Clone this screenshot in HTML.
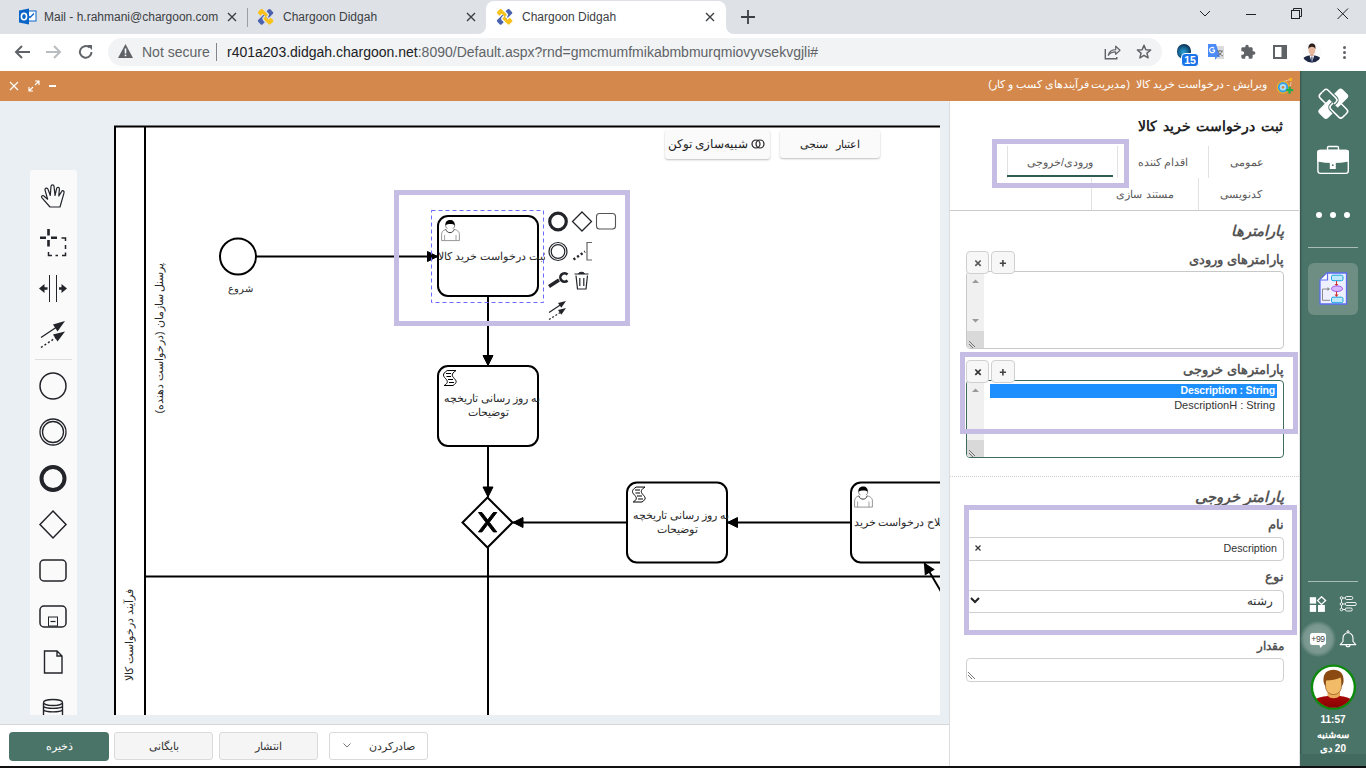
<!DOCTYPE html>
<html><head><meta charset="utf-8">
<style>
*{box-sizing:border-box;margin:0;padding:0}
html,body{width:1366px;height:768px;overflow:hidden;background:#fff;font-family:"Liberation Sans",sans-serif}
.abs{position:absolute}
#tabs{left:0;top:0;width:1366px;height:34px;background:#dee1e6}
#addr{left:0;top:34px;width:1366px;height:37px;background:#fff}
#orange{left:0;top:71px;width:1300px;height:30px;background:#d4884b}
#side{left:1300px;top:71px;width:66px;height:695px;background:#4b7468;box-shadow:inset 2px 0 2px -1px rgba(0,0,0,.3)}
#canvas{left:0;top:101px;width:950px;height:623px;background:#eaeff3}
#bottom{left:0;top:724px;width:950px;height:42px;background:#fff;border-top:1px solid #d6d6d6}
#panel{left:949px;top:101px;width:351px;height:665px;background:#fff;border-left:1px solid #dcdcdc;border-right:1px solid #e4e4e4}
#black{left:0;top:766px;width:1366px;height:2px;background:#111}
.t{position:absolute;white-space:nowrap;line-height:1}
.fa{direction:rtl}
</style></head><body>
<!-- TAB STRIP -->
<div id="tabs" class="abs">
  <!-- tab1 -->
  <svg class="abs" style="left:19px;top:8px" width="18" height="17" viewBox="0 0 18 17">
    <rect x="7" y="3" width="10" height="10" fill="#fff" stroke="#0a64c8" stroke-width="1"/>
    <path d="M9 7.5 l2 2 l4 -4" fill="none" stroke="#0a64c8" stroke-width="1.3"/>
    <path d="M0 2.5 L10 0.5 V16.5 L0 14.5 Z" fill="#0a64c8"/>
    <ellipse cx="5" cy="8.5" rx="2.6" ry="3.3" fill="none" stroke="#fff" stroke-width="1.6"/>
  </svg>
  <div class="t" style="left:44px;top:11px;font-size:12px;color:#3c4043">Mail - h.rahmani@chargoon.com</div>
  <svg class="abs" style="left:227px;top:12px" width="10" height="10"><path d="M1 1L9 9M9 1L1 9" stroke="#3c4043" stroke-width="1.4"/></svg>
  <div class="abs" style="left:247px;top:8px;width:1px;height:19px;background:#9aa0a6"></div>
  <!-- tab2 -->
  <svg class="abs" style="left:254px;top:5px" width="24" height="24" viewBox="0 0 44 44">
    <g id="fv2A"><rect x="-9.6" y="-6.8" width="19.2" height="13.6" rx="3.4" transform="translate(16.1 16.1) rotate(45)" fill="#f8c21a" stroke="#dee1e6" stroke-width="2.4"/></g>
    <g id="fv2C"><rect x="-9.6" y="-6.8" width="19.2" height="13.6" rx="3.4" transform="translate(26.6 27) rotate(45)" fill="#f8c21a" stroke="#dee1e6" stroke-width="2.4"/></g>
    <rect x="-9.6" y="-6.8" width="19.2" height="13.6" rx="3.4" transform="translate(26.4 16.3) rotate(-45)" fill="#4a62b0" stroke="#dee1e6" stroke-width="2.4"/>
    <rect x="-9.6" y="-6.8" width="19.2" height="13.6" rx="3.4" transform="translate(16 27.2) rotate(-45)" fill="#4a62b0" stroke="#dee1e6" stroke-width="2.4"/>
    <use href="#fv2A" clip-path="url(#ur)"/><use href="#fv2C" clip-path="url(#ll)"/>
  </svg>
  <div class="t" style="left:283px;top:11px;font-size:12px;color:#3c4043">Chargoon Didgah</div>
  <svg class="abs" style="left:466px;top:12px" width="10" height="10"><path d="M1 1L9 9M9 1L1 9" stroke="#3c4043" stroke-width="1.4"/></svg>
  <!-- active tab -->
  <div class="abs" style="left:486px;top:1px;width:240px;height:34px;background:#fff;border-radius:8px 8px 0 0"></div>
  <div class="abs" style="left:478px;top:26px;width:8px;height:8px;background:#fff"></div>
  <div class="abs" style="left:478px;top:26px;width:8px;height:8px;background:#dee1e6;border-radius:0 0 8px 0"></div>
  <div class="abs" style="left:726px;top:26px;width:8px;height:8px;background:#fff"></div>
  <div class="abs" style="left:726px;top:26px;width:8px;height:8px;background:#dee1e6;border-radius:0 0 0 8px"></div>
  <svg class="abs" style="left:493px;top:5px" width="24" height="24" viewBox="0 0 44 44">
    <g id="fv3A"><rect x="-9.6" y="-6.8" width="19.2" height="13.6" rx="3.4" transform="translate(16.1 16.1) rotate(45)" fill="#f8c21a" stroke="#fff" stroke-width="2.4"/></g>
    <g id="fv3C"><rect x="-9.6" y="-6.8" width="19.2" height="13.6" rx="3.4" transform="translate(26.6 27) rotate(45)" fill="#f8c21a" stroke="#fff" stroke-width="2.4"/></g>
    <rect x="-9.6" y="-6.8" width="19.2" height="13.6" rx="3.4" transform="translate(26.4 16.3) rotate(-45)" fill="#4a62b0" stroke="#fff" stroke-width="2.4"/>
    <rect x="-9.6" y="-6.8" width="19.2" height="13.6" rx="3.4" transform="translate(16 27.2) rotate(-45)" fill="#4a62b0" stroke="#fff" stroke-width="2.4"/>
    <use href="#fv3A" clip-path="url(#ur)"/><use href="#fv3C" clip-path="url(#ll)"/>
  </svg>
  <div class="t" style="left:522px;top:11px;font-size:12px;color:#3c4043">Chargoon Didgah</div>
  <svg class="abs" style="left:705px;top:12px" width="10" height="10"><path d="M1 1L9 9M9 1L1 9" stroke="#3c4043" stroke-width="1.4"/></svg>
  <svg class="abs" style="left:740px;top:9px" width="16" height="16"><path d="M8 1V15M1 8H15" stroke="#3c4043" stroke-width="1.8"/></svg>
  <!-- window controls -->
  <svg class="abs" style="left:1199px;top:10px" width="12" height="8"><path d="M1 1L6 6L11 1" fill="none" stroke="#202124" stroke-width="1"/></svg>
  <div class="abs" style="left:1246px;top:14px;width:10px;height:1px;background:#202124"></div>
  <svg class="abs" style="left:1291px;top:8px" width="12" height="12"><rect x="0.5" y="2.5" width="8" height="8" fill="none" stroke="#202124"/><path d="M2.5 2.5V0.5H10.5V8.5H8.5" fill="none" stroke="#202124"/></svg>
  <svg class="abs" style="left:1337px;top:8px" width="12" height="12"><path d="M0.5 0.5L11 11M11 0.5L0.5 11" stroke="#202124" stroke-width="1"/></svg>
</div>
<!-- ADDRESS BAR -->
<div id="addr" class="abs">
  <svg class="abs" style="left:13px;top:10px" width="18" height="16"><path d="M17 8H3M9 2L3 8L9 14" fill="none" stroke="#5f6368" stroke-width="2"/></svg>
  <svg class="abs" style="left:45px;top:10px" width="18" height="16"><path d="M1 8H15M9 2L15 8L9 14" fill="none" stroke="#b9bcc0" stroke-width="2"/></svg>
  <svg class="abs" style="left:77px;top:9px" width="18" height="18" viewBox="0 0 18 18"><path d="M14.5 9 A5.8 5.8 0 1 1 12.6 4.6" fill="none" stroke="#5f6368" stroke-width="2"/><path d="M10 2 H15 V7 Z" fill="#5f6368"/></svg>
  <div class="abs" style="left:108px;top:4px;width:1054px;height:28px;background:#f1f3f4;border-radius:14px"></div>
  <svg class="abs" style="left:117px;top:9px" width="17" height="16" viewBox="0 0 17 16"><path d="M8.5 1L16 15H1Z" fill="#5f6368"/><rect x="7.7" y="5.5" width="1.6" height="5" fill="#fff"/><rect x="7.7" y="11.6" width="1.6" height="1.6" fill="#fff"/></svg>
  <div class="t" style="left:142px;top:11px;font-size:14px;color:#5f6368">Not secure</div>
  <div class="abs" style="left:216px;top:9px;width:1px;height:18px;background:#80868b"></div>
  <div class="t" style="left:227px;top:11px;font-size:14px;color:#202124">r401a203.didgah.chargoon.net<span style="color:#5f6368">:8090/Default.aspx?rnd=gmcmumfmikabmbmurqmiovyvsekvgjli#</span></div>
  <svg class="abs" style="left:1103px;top:11px" width="20" height="16" viewBox="0 0 20 16"><path d="M2.3 4V13.7H13.8V12" fill="none" stroke="#5f6368" stroke-width="1.4"/><path d="M5.2 10.3C6.2 6.8 9 4.7 12.7 4.7V1.2L17 5.3L12.7 9.4V6.9C9.6 6.9 7 7.9 5.2 10.3Z" fill="none" stroke="#5f6368" stroke-width="1.2" stroke-linejoin="round"/></svg>
  <svg class="abs" style="left:1135px;top:9px" width="18" height="18" viewBox="0 0 18 18"><path d="M9.00 2.20L10.82 6.69L15.66 7.04L11.95 10.16L13.11 14.86L9.00 12.30L4.89 14.86L6.05 10.16L2.34 7.04L7.18 6.69Z" fill="none" stroke="#5f6368" stroke-width="1.5" stroke-linejoin="round"/></svg>
  <!-- ext 1 -->
  <div class="abs" style="left:1176.5px;top:10px;width:14.5px;height:14.5px;border-radius:50%;background:radial-gradient(circle at 45% 55%,#2aa4d8 0%,#1a6fa0 35%,#0b2a4c 75%)"></div>
  <div class="abs" style="left:1181px;top:19px;width:18px;height:14px;background:#1a73e8;border:1px solid #fff;border-radius:4px;color:#fff;font-size:10.5px;font-weight:bold;line-height:12px;text-align:center">15</div>
  <!-- translate -->
  <div class="abs" style="left:1215px;top:12px;width:9px;height:13px;background:#dcdcdc"></div>
  <svg class="abs" style="left:1207px;top:9px" width="14" height="18" viewBox="0 0 14 18"><path d="M1 1H9L13 14H10L8 17V14H1Z" fill="#4c8bf5"/><path d="M7.8 7.2A2.6 2.6 0 1 1 7 5.2M5.4 7.2H8" fill="none" stroke="#fff" stroke-width="1.2"/></svg>
  <svg class="abs" style="left:1216px;top:15px" width="8" height="8"><path d="M1 2H7M4 1V2M2 2C3 5 5 6 7 7M6 2C5 5 3 6 1 7" fill="none" stroke="#666" stroke-width="0.8"/></svg>
  <!-- puzzle -->
  <svg class="abs" style="left:1240px;top:10px" width="16" height="16" viewBox="0 0 24 24"><path d="M20.5 11H19V7c0-1.1-.9-2-2-2h-4V3.5C13 2.12 11.88 1 10.5 1S8 2.12 8 3.5V5H4c-1.1 0-1.99.9-1.99 2v3.8H3.5c1.49 0 2.7 1.21 2.7 2.7s-1.21 2.7-2.7 2.7H2V20c0 1.1.9 2 2 2h3.8v-1.5c0-1.490 1.21-2.7 2.7-2.7 1.49 0 2.7 1.21 2.7 2.7V22H17c1.1 0 2-.9 2-2v-4h1.5c1.38 0 2.5-1.12 2.5-2.5S21.880 11 20.5 11z" fill="#5f6368"/></svg>
  <!-- sidebar -->
  <svg class="abs" style="left:1273px;top:11px" width="14" height="14"><rect x="1" y="1" width="12" height="12" fill="none" stroke="#5f6368" stroke-width="2"/><rect x="8.5" y="1" width="4.5" height="12" fill="#5f6368"/></svg>
  <!-- avatar -->
  <svg class="abs" style="left:1302px;top:8px" width="20" height="21" viewBox="0 0 20 21">
    <defs><clipPath id="cav"><circle cx="9.8" cy="10.6" r="10"/></clipPath></defs>
    <g clip-path="url(#cav)">
      <rect x="0" y="0" width="20" height="21" fill="#fbfbfb"/>
      <path d="M0 21V17.5C1.5 15 4.5 14 7 13.5H12.8C15.3 14 18.3 15 19.8 17.5V21Z" fill="#1e2743"/>
      <path d="M7.6 13.5H12.2L9.9 21Z" fill="#fff"/>
      <path d="M9.4 14.6H10.4L10.6 21H9.2Z" fill="#2b3a6e"/>
      <rect x="8.3" y="10.8" width="3.2" height="3" fill="#d8a488"/>
      <ellipse cx="9.9" cy="8.2" rx="3.3" ry="4.3" fill="#e6b79c"/>
      <path d="M6.4 7.6C6 3.2 8 1.6 10 1.6C12.2 1.6 14 3 13.4 7.6C13 5.6 12 4.8 10 4.8C8 4.8 6.8 5.6 6.4 7.6Z" fill="#2a201b"/>
    </g>
  </svg>
  <svg class="abs" style="left:1341px;top:10px" width="6" height="18"><circle cx="3.5" cy="3.5" r="1.5" fill="#5f6368"/><circle cx="3.5" cy="8.5" r="1.5" fill="#5f6368"/><circle cx="3.5" cy="13.5" r="1.5" fill="#5f6368"/></svg>
</div>
<!-- ORANGE BAR -->
<div id="orange" class="abs">
  <svg class="abs" style="left:9px;top:10px" width="10" height="10"><path d="M1 1L9 9M9 1L1 9" stroke="#fff" stroke-width="1.2"/></svg>
  <svg class="abs" style="left:28px;top:9px" width="12" height="12"><path d="M1 11L5 7M11 1L7 5M1 7V11H5M7 1H11V5" fill="none" stroke="#fff" stroke-width="1.2"/></svg>
  <div class="abs" style="left:49px;top:14px;width:7px;height:1.5px;background:#fff"></div>
  <div class="t fa" style="right:33px;top:8px;font-size:10.5px;color:#fff">ویرایش - درخواست خرید کالا &nbsp;(مدیریت فرآیندهای کسب و کار)</div>
  <svg class="abs" style="left:1276px;top:6px" width="20" height="20" viewBox="0 0 20 20">
    <path d="M8 4.5L14 2.3M15 5.5L14.2 9" stroke="#f3dcc0" stroke-width="1.1" stroke-dasharray="1.5 0.8"/>
    <rect x="13.2" y="1" width="3" height="3" fill="#f7b520"/>
    <circle cx="7" cy="10.3" r="5.8" fill="#3d9fdf" stroke="#f5b21e" stroke-width="1.1"/>
    <circle cx="7" cy="10.3" r="3.2" fill="#a8e2fb"/>
    <circle cx="7" cy="10.3" r="1.4" fill="#d4884b"/>
    <path d="M10.2 13.2H17.2M13.6 9.8V16.8" stroke="#20ad4f" stroke-width="2.2"/>
  </svg>
</div>

<!-- CANVAS -->
<div id="canvas" class="abs"></div>
<div class="abs" style="left:30px;top:170px;width:47px;height:545px;background:#fafafa;border-radius:3px 3px 0 0"></div>
<svg class="abs" style="left:0;top:0" width="950" height="724" viewBox="0 0 950 724">
  <defs>
    <clipPath id="dclip"><rect x="0" y="101" width="940" height="614"/></clipPath>
    <marker id="arr" viewBox="0 0 20 20" refX="11" refY="10" markerWidth="10" markerHeight="10" orient="auto"><path d="M1 5L11 10L1 15Z" fill="#000" stroke="#000" stroke-width="1"/></marker>
  </defs>
  <!-- palette icons -->
  <g fill="none" stroke="#22242a" stroke-width="1.5">
    <!-- hand -->
    <path d="M50 207L41.8 197.6C41 196.6 42.2 195 43.6 195.7L47.6 199.2L45 190C44.6 188 47.4 187.2 48 189.2L50.3 195.5L51 186.3C51.2 184.4 53.9 184.4 54 186.3L55 195.5L56.6 188.6C57 186.8 59.6 187.2 59.4 189L58.8 196L61.6 191.6C62.4 190 64.6 190.8 64 192.8L60 207Z" stroke-width="1.2" stroke-linejoin="round"/>
    <!-- lasso -->
    <path d="M48.5 229V235.5M48.5 240V246.5M40 237.8H46M51 237.8H57" stroke-width="2.6"/>
    <path d="M61.5 238H65.5V241M65.5 245V249M65.5 252.5V255.5H62M58 255.5H55.5M52 255.5H48.5V252" stroke-width="1.5"/>
    <!-- space -->
    <path d="M49.5 275V302M56.5 275V302" stroke-width="1"/>
    <path d="M43 288.5H47.5M59 288.5H63.5" stroke-width="2.6"/>
    <path d="M39 288.5L44.5 284V293Z M67 288.5L61.5 284V293Z" fill="#22242a" stroke="none"/>
    <!-- connect -->
    <path d="M41 337.5L56 327.5" stroke-width="1.3"/><path d="M65 321L53 324.5L57.5 331.5Z" fill="#22242a" stroke="none"/>
    <path d="M41 347.5L56 337.5" stroke-dasharray="2 2.2" stroke-width="1.5"/><path d="M65 331.5L53 334.5L57.5 341.5Z" fill="#22242a" stroke="none"/>
  </g>
  <rect x="35" y="359" width="37" height="1" fill="#dedede"/>
  <g fill="none" stroke="#22242a">
    <circle cx="53" cy="386" r="13" stroke-width="1.5"/>
    <circle cx="53" cy="432" r="13" stroke-width="1.3"/><circle cx="53" cy="432" r="10.5" stroke-width="1.3"/>
    <circle cx="53" cy="478.5" r="11.5" stroke-width="4"/>
    <path d="M53 511L66 524.5L53 538L40 524.5Z" stroke-width="1.5"/>
    <rect x="40" y="560" width="26" height="21" rx="4" stroke-width="1.5"/>
    <rect x="40" y="606" width="26" height="21" rx="4" stroke-width="1.5"/>
    <rect x="48.5" y="617" width="9" height="9" stroke-width="1"/><path d="M50.5 621.5H55.5" stroke-width="1.2"/>
    <path d="M44.5 651H57L62 656V673H44.5Z M57 651V656H62" stroke-width="1.4"/>
    <path d="M43.5 703V716M62.5 703V716" stroke-width="1.4"/>
    <ellipse cx="53" cy="702.5" rx="9.5" ry="3" stroke-width="1.3"/>
    <path d="M43.5 706.5C46 709 60 709 62.5 706.5M43.5 710C46 712.5 60 712.5 62.5 710" stroke-width="1.3"/>
  </g>
  <rect x="30" y="715" width="50" height="9" fill="#eaeff3"/>
  <g clip-path="url(#dclip)">
    <rect x="115" y="126.5" width="840" height="588.5" fill="#fff"/>
    <g fill="none" stroke="#000" stroke-width="2">
      <path d="M115 715V126.5H945"/>
      <path d="M145 126.5V715"/>
      <path d="M145 576.5H945"/>
      <circle cx="238" cy="256.5" r="18"/>
      <path d="M256.5 256.5H437.5" marker-end="url(#arr)"/>
      <path d="M488 296V365.5" marker-end="url(#arr)"/>
      <path d="M488 446V497" marker-end="url(#arr)"/>
      <path d="M488 547.5V720"/>
      <path d="M627 522.5H513" marker-end="url(#arr)"/>
      <path d="M851 522.5H727.5" marker-end="url(#arr)"/>
      <path d="M948 603.5L924.5 563.5" marker-end="url(#arr)"/>
      <rect x="438" y="216" width="100" height="80" rx="10"/>
      <rect x="438" y="366" width="100" height="80" rx="10"/>
      <path d="M487.5 497.5L512.5 522.5L487.5 547.5L462.5 522.5Z"/>
      <rect x="627" y="482.5" width="100" height="80" rx="10"/>
      <rect x="851" y="482.5" width="100" height="80" rx="10"/>
    </g>
    <path d="M478.5 512.5l7.43 9.71l-7.43 9.71h3.43l5.71-7.46l5.71 7.46h3.43l-7.43-9.71l7.43-9.71h-3.43l-5.71 7.46l-5.71-7.46z" fill="#000" stroke="#000" stroke-width="1" stroke-linejoin="round"/>
    <!-- user icons -->
    <g id="usr1" fill="none">
      <path d="M445.8 229.3C443 230.3 441.6 232 441.6 234.5V240.6H459.4V234.5C459.4 232 458 230.3 454.2 229.3" fill="#fff" stroke="#8a8a8a" stroke-width="0.9"/>
      <path d="M444.6 235V240.6M456 235V240.6" stroke="#999" stroke-width="0.9"/>
      <path d="M445.8 229.3C447 233.8 453 233.8 454.2 229.3" stroke="#222" stroke-width="0.9"/>
      <path d="M447.3 228.7A4.7 4.7 0 0 1 445.5 224.7M453 228.7A4.7 4.7 0 0 0 454.8 224.7" stroke="#666" stroke-width="0.8"/>
      <path d="M445.4 225.2C445.1 221.5 447.3 219.9 450.2 219.9C453 219.9 455 221.8 454.9 225.3C452.6 223.4 448 223.6 445.4 225.2Z" fill="#000"/>
    </g>
    <use href="#usr1" transform="translate(413 266.5)"/>
    <!-- script icons -->
    <g id="scr1" fill="none" stroke="#000" stroke-width="1" transform="translate(0 -0.5)">
      <path d="M453 386c9.966553-6.27276-8.000926-7.91932 2.968968-14.938l-8.802728 0c-10.969894 7.01868 6.997585 8.66524-2.968967 14.938z" fill="#fff"/>
      <path d="M446 374h5M446.5 377h4.5M448 380h5M449 383h5"/>
    </g>
    <use href="#scr1" transform="translate(189 116.5)"/>
    <g font-family="Liberation Sans, sans-serif" font-size="10.6" fill="#2a2a2a" text-anchor="middle" direction="rtl">
      <text x="240" y="292" font-size="10">شروع</text>
      <text x="492" y="260">ثبت درخواست خرید کالا</text>
      <text x="492" y="401.5">به روز رسانی تاریخچه</text>
      <text x="488" y="415.5">توضیحات</text>
      <text x="681" y="518.5">به روز رسانی تاریخچه</text>
      <text x="677" y="532.5">توضیحات</text>
      <text x="903.5" y="525.5">اصلاح درخواست خرید</text>
      <text transform="translate(162.5 338) rotate(-90)">پرسنل سازمان (درخواست دهنده)</text>
      <text transform="translate(132.5 635) rotate(-90)">فرآیند درخواست کالا</text>
    </g>
    <!-- selection -->
    <rect x="431.5" y="210.5" width="112" height="92" fill="none" stroke="#6b6bff" stroke-width="1" stroke-dasharray="4 3"/>
    <!-- context pad -->
    <rect x="545" y="207" width="75" height="118" fill="#fff" opacity="0.95"/>
    <g fill="none" stroke="#22242a">
      <circle cx="558" cy="221.5" r="8.3" stroke-width="3.2"/>
      <path d="M582 212L591.5 221.5L582 231L572.5 221.5Z" stroke-width="1.3"/>
      <rect x="596.5" y="213.5" width="19" height="15.5" rx="3" stroke="#555" stroke-width="1.1"/>
      <circle cx="558" cy="251.5" r="9" stroke-width="1.2"/><circle cx="558" cy="251.5" r="6.8" stroke-width="1.2"/>
      <path d="M573.5 259.5L585 251.5" stroke-dasharray="2.2 2.2" stroke-width="2.4"/>
      <path d="M592 242.5H587V260H592" stroke="#666" stroke-width="1.2"/>
      <path d="M549 286.5L559 280" stroke-width="3.4"/>
      <path d="M567.5 274.5A4.2 4.2 0 1 0 567.5 280.5" stroke-width="2.6"/>
      <path d="M574.5 274H588.5M576 275.5L577.5 289H586L587.5 275.5M579.8 278V286M583.8 278V286" stroke-width="1.2"/>
      <path d="M578.5 273.6C579 271.8 584 271.8 584.5 273.6Z" fill="#22242a" stroke-width="1"/>
      <path d="M549 312.5L561 304.5" stroke-width="1.2"/>
      <path d="M549 319.5L561 312" stroke-width="1.2" stroke-dasharray="2 1.8"/>
    </g>
    <path d="M566 301L558 303L561.3 307.8Z M566 308L558 310L561.3 314.8Z" fill="#22242a"/>
    <!-- highlight -->
    <rect x="396.5" y="192.5" width="231" height="131" fill="none" stroke="#c6bde5" stroke-width="5"/>
  </g>
</svg>
<!-- canvas buttons -->
<div class="abs" style="left:780px;top:130px;width:100px;height:28px;background:#fafafa;border-radius:3px;box-shadow:0 1px 2px rgba(0,0,0,.25)"></div>
<div class="t fa" style="left:780px;top:139px;width:100px;text-align:center;font-size:11.4px;word-spacing:4.5px;color:#222">اعتبار سنجی</div>
<div class="abs" style="left:665px;top:130px;width:105px;height:29px;background:#fafafa;border-radius:3px;box-shadow:0 1px 2px rgba(0,0,0,.25)"></div>
<div class="t fa" style="right:618px;top:139px;font-size:11.5px;color:#222">شبیه‌سازی توکن</div>
<svg class="abs" style="left:751px;top:139px" width="14" height="10"><circle cx="5" cy="5" r="4" fill="none" stroke="#222" stroke-width="1.2"/><circle cx="9" cy="5" r="4" fill="none" stroke="#222" stroke-width="1.2"/></svg>
<!-- BOTTOM TOOLBAR -->
<div id="bottom" class="abs">
  <div class="abs" style="left:9px;top:7px;width:100px;height:29px;background:#4b7469;border-radius:4px;color:#fff;font-size:11px;text-align:center;line-height:28px;direction:rtl">ذخیره</div>
  <div class="abs" style="left:114px;top:7px;width:99px;height:28px;background:#f5f5f5;border:1px solid #dadada;border-radius:3px;color:#333;font-size:11px;text-align:center;line-height:26px;direction:rtl">بایگانی</div>
  <div class="abs" style="left:219px;top:7px;width:99px;height:28px;background:#f5f5f5;border:1px solid #dadada;border-radius:3px;color:#333;font-size:11px;text-align:center;line-height:26px;direction:rtl">انتشار</div>
  <div class="abs" style="left:329px;top:7px;width:99px;height:28px;background:#fff;border:1px solid #dadada;border-radius:3px;color:#333;font-size:11px;line-height:26px;direction:rtl;padding-right:12.5px">صادرکردن</div>
  <svg class="abs" style="left:343px;top:18px" width="8" height="5"><path d="M0.5 0.5L4 4L7.5 0.5" fill="none" stroke="#777" stroke-width="1"/></svg>
</div>

<!-- RIGHT PANEL -->
<div id="panel" class="abs"></div>
<div class="t fa" style="right:83px;top:119px;font-size:14px;font-weight:bold;color:#222;word-spacing:1.8px">ثبت درخواست خرید کالا</div>
<!-- tabs -->
<div class="abs" style="left:1007px;top:146px;width:1px;height:32px;background:#e2e2e2"></div>
<div class="abs" style="left:1117px;top:146px;width:1px;height:32px;background:#e2e2e2"></div>
<div class="abs" style="left:1208px;top:146px;width:1px;height:32px;background:#e2e2e2"></div>
<div class="abs" style="left:1091px;top:178px;width:1px;height:32px;background:#e2e2e2"></div>
<div class="abs" style="left:1198px;top:178px;width:1px;height:32px;background:#e2e2e2"></div>
<div class="abs" style="left:950px;top:210px;width:349px;height:1px;background:#cbcbcb"></div>
<div class="abs" style="left:1007px;top:175px;width:106px;height:2px;background:#2f5e51"></div>
<div class="t fa" style="left:1007px;top:157px;width:106px;text-align:center;font-size:11px;color:#5a5a5a">ورودی/خروجی</div>
<div class="t fa" style="left:1118px;top:157px;width:90px;text-align:center;font-size:11px;color:#5a5a5a">اقدام کننده</div>
<div class="t fa" style="left:1209px;top:157px;width:76px;text-align:center;font-size:11px;color:#5a5a5a">عمومی</div>
<div class="t fa" style="left:1092px;top:189px;width:106px;text-align:center;font-size:11px;color:#5a5a5a">مستند سازی</div>
<div class="t fa" style="left:1199px;top:189px;width:84px;text-align:center;font-size:11px;color:#5a5a5a">کدنویسی</div>
<div class="abs" style="left:992px;top:139px;width:137px;height:49px;border:5px solid #c6bde5"></div>
<!-- parameters -->
<div class="t fa" style="right:82px;top:224px;font-size:14.8px;font-weight:bold;font-style:italic;color:#555">پارامترها</div>
<div class="t fa" style="right:82px;top:254px;font-size:12.7px;font-weight:bold;color:#555">پارامترهای ورودی</div>
<!-- input listbox -->
<div class="abs" style="left:966px;top:271px;width:318px;height:78px;border:1px solid #c8c8c8;border-radius:4px;background:#fff;overflow:hidden">
  <div class="abs" style="left:0;top:0;width:17px;height:78px;background:#f0f0f0"></div>
  <div class="abs" style="left:0;top:59px;width:17px;height:19px;background:#d9d9d9"></div>
  <svg class="abs" style="left:0;top:0" width="17" height="78"><path d="M5 11L8.5 7.5L12 11Z M5 47L8.5 50.5L12 47Z" fill="#999"/><path d="M2 69L8 75M2 72L6 76" stroke="#555" stroke-width="0.8"/></svg>
</div>
<div class="abs" style="left:966px;top:251px;width:23px;height:23px;background:#f7f7f7;border:1px solid #d0d0d0;border-radius:4px"></div>
<div class="abs" style="left:991px;top:251px;width:23.5px;height:23px;background:#f7f7f7;border:1px solid #d0d0d0;border-radius:4px"></div>
<svg class="abs" style="left:966px;top:251px" width="48" height="23"><path d="M9.3 9.5L14.7 14.8M14.7 9.5L9.3 14.8" stroke="#5a5a5a" stroke-width="1.7"/><path d="M33.8 12.3H40M36.9 9V15.5" stroke="#444" stroke-width="1.6"/></svg>

<!-- output params -->
<div class="t fa" style="right:82px;top:364px;font-size:12.7px;font-weight:bold;color:#555">پارامترهای خروجی</div>
<div class="abs" style="left:966px;top:380px;width:318px;height:78px;border:1px solid #3e6b5e;border-radius:4px;background:#fff;overflow:hidden">
  <div class="abs" style="left:0;top:0;width:17px;height:78px;background:#f0f0f0"></div>
  <div class="abs" style="left:0;top:59px;width:17px;height:19px;background:#d9d9d9"></div>
  <svg class="abs" style="left:0;top:0" width="17" height="78"><path d="M5 11L8.5 7.5L12 11Z" fill="#999"/><path d="M2 69L8 75M2 72L6 76" stroke="#555" stroke-width="0.8"/></svg>
  <div class="abs" style="left:23px;top:3px;width:287px;height:14px;background:#1e8fff"></div>
  <div class="t" style="right:8px;top:4px;font-size:10.5px;font-weight:bold;color:#fff;letter-spacing:-0.15px">Description : String</div>
  <div class="t" style="right:8px;top:19px;font-size:11px;color:#333">DescriptionH : String</div>
</div>
<div class="abs" style="left:966px;top:360px;width:23px;height:23px;background:#f7f7f7;border:1px solid #d0d0d0;border-radius:4px"></div>
<div class="abs" style="left:991px;top:360px;width:23.5px;height:23px;background:#f7f7f7;border:1px solid #d0d0d0;border-radius:4px"></div>
<svg class="abs" style="left:966px;top:360px" width="48" height="23"><path d="M9.3 9.5L14.7 14.8M14.7 9.5L9.3 14.8" stroke="#333" stroke-width="1.7"/><path d="M33.8 12.3H40M36.9 9V15.5" stroke="#444" stroke-width="1.6"/></svg>

<div class="abs" style="left:960px;top:352px;width:338px;height:82px;border:5px solid #c6bde5"></div>
<div class="abs" style="left:950px;top:476px;width:349px;height:0;border-top:1px dotted #cfcfcf"></div>
<!-- output param -->
<div class="t fa" style="right:82px;top:490px;font-size:14.8px;font-weight:bold;font-style:italic;color:#555">پارامتر خروجی</div>
<div class="t fa" style="right:82px;top:519px;font-size:12.5px;font-weight:bold;color:#555">نام</div>
<div class="abs" style="left:966px;top:537px;width:318px;height:24px;border:1px solid #cfcfcf;border-radius:4px;background:#fff"></div>
<div class="t" style="right:89px;top:543px;font-size:10.7px;color:#333">Description</div>
<svg class="abs" style="left:975px;top:545px" width="6" height="6"><path d="M0.5 0.5L5.5 5.5M5.5 0.5L0.5 5.5" stroke="#333" stroke-width="1.2"/></svg>
<div class="t fa" style="right:82px;top:571px;font-size:12.5px;font-weight:bold;color:#555">نوع</div>
<div class="abs" style="left:966px;top:590px;width:318px;height:23px;border:1px solid #cfcfcf;border-radius:4px;background:#fff"></div>
<div class="t fa" style="right:93px;top:596px;font-size:11.5px;color:#333">رشته</div>
<svg class="abs" style="left:970px;top:597px" width="10" height="7"><path d="M1 1L5 5L9 1" fill="none" stroke="#222" stroke-width="2"/></svg>
<div class="abs" style="left:964px;top:505px;width:333px;height:130px;border:5px solid #c6bde5"></div>
<div class="t fa" style="right:82px;top:640px;font-size:12px;font-weight:bold;color:#555">مقدار</div>
<div class="abs" style="left:966px;top:658px;width:318px;height:24px;border:1px solid #cfcfcf;border-radius:4px;background:#fff"></div>
<svg class="abs" style="left:967px;top:671px" width="10" height="10"><path d="M1 1L8 8M1 4L5 8" stroke="#555" stroke-width="0.8"/></svg>
<!-- SIDEBAR -->
<div id="side" class="abs">
  <svg class="abs" style="left:12px;top:11px" width="44" height="44" viewBox="0 0 44 44">
    <defs>
      <clipPath id="ur"><path d="M-10 -10H54V54Z"/></clipPath>
      <clipPath id="ll"><path d="M-10 -10V54H54Z"/></clipPath>
      <g id="lkA"><rect x="-8.4" y="-5.6" width="16.8" height="11.2" rx="2.8" transform="translate(16.1 16.1) rotate(45)" fill="#4b7468" stroke="#4b7468" stroke-width="3.6"/><rect x="-8.4" y="-5.6" width="16.8" height="11.2" rx="2.8" transform="translate(16.1 16.1) rotate(45)" fill="none" stroke="#fff" stroke-width="1.5"/></g>
      <g id="lkC"><rect x="-8.4" y="-5.6" width="16.8" height="11.2" rx="2.8" transform="translate(26.8 27.2) rotate(45)" fill="#4b7468" stroke="#4b7468" stroke-width="3.6"/><rect x="-8.4" y="-5.6" width="16.8" height="11.2" rx="2.8" transform="translate(26.8 27.2) rotate(45)" fill="none" stroke="#fff" stroke-width="1.5"/></g>
    </defs>
    <use href="#lkA"/><use href="#lkC"/>
    <g fill="#fff">
      <rect x="-9" y="-6.2" width="18" height="12.4" rx="3" transform="translate(26.6 16.2) rotate(-45)"/>
      <rect x="-9" y="-6.2" width="18" height="12.4" rx="3" transform="translate(15.9 27.3) rotate(-45)"/>
    </g>
    <use href="#lkA" clip-path="url(#ur)"/>
    <use href="#lkC" clip-path="url(#ll)"/>
  </svg>
  <svg class="abs" style="left:12px;top:67px" width="44" height="44" viewBox="0 0 44 44">
    <rect x="15.5" y="8.5" width="11" height="4" rx="1.2" fill="none" stroke="#fff" stroke-width="1.4"/>
    <rect x="5.9" y="12.4" width="30.4" height="23" rx="2.6" fill="none" stroke="#fff" stroke-width="1.4"/>
    <path d="M5.2 14.5A2.5 2.5 0 0 1 7.7 11.7H34.5A2.5 2.5 0 0 1 37 14.5V23.5Q21 26.5 5.2 23.5Z" fill="#fff"/>
    <rect x="17.8" y="24.5" width="6" height="6.5" fill="#fff"/>
    <circle cx="20.8" cy="27.2" r="0.9" fill="#4b7468"/>
  </svg>
  <div class="abs" style="left:16px;top:141px;width:6px;height:6px;border-radius:50%;background:#fff"></div>
  <div class="abs" style="left:30px;top:141px;width:6px;height:6px;border-radius:50%;background:#fff"></div>
  <div class="abs" style="left:44px;top:141px;width:6px;height:6px;border-radius:50%;background:#fff"></div>
  <div class="abs" style="left:8px;top:176px;width:50px;height:1px;background:#a8bdb6"></div>
  <div class="abs" style="left:8px;top:192px;width:50px;height:52px;border-radius:6px;background:#6e8e84"></div>
  <svg class="abs" style="left:6px;top:191px" width="54" height="54" viewBox="0 0 54 54">
    <path d="M21 11H40.5V42H14V18Z" fill="#eef0ff" stroke="#5b6cf2" stroke-width="1.3"/>
    <path d="M14.5 18H21.5V11" fill="#fff" stroke="#5b6cf2" stroke-width="1.2"/>
    <rect x="25.5" y="13.2" width="11.5" height="5.5" rx="1.5" fill="#bfe8f8" stroke="#1aa6e0" stroke-width="1"/>
    <ellipse cx="31" cy="26.7" rx="5.6" ry="2.8" fill="#d8b8ff" stroke="#9a5cf0" stroke-width="1"/>
    <rect x="25.5" y="35.2" width="11.5" height="5.5" rx="1.5" fill="#bfe8f8" stroke="#1aa6e0" stroke-width="1"/>
    <path d="M30.5 19V22M30.5 29.5V33" stroke="#d03030" stroke-width="1"/>
    <path d="M28.5 22H32.5L30.5 24Z M28.5 32.5H32.5L30.5 35Z" fill="#d03030"/>
    <path d="M24 38.3H16.5V27H22" fill="none" stroke="#8a8a8a" stroke-width="1"/>
    <path d="M21.5 25L24 27L21.5 29Z" fill="#8a8a8a"/>
  </svg>
  <div class="abs" style="left:8px;top:510px;width:50px;height:1px;background:#a8bdb6"></div>
  <!-- apps icon -->
  <svg class="abs" style="left:9px;top:525px" width="18" height="17" viewBox="0 0 18 17"><rect x="0.8" y="1.2" width="6.3" height="6.4" fill="#fff"/><rect x="0.8" y="9" width="6.3" height="6.9" fill="#fff"/><rect x="9" y="9" width="6.9" height="6.9" fill="#fff"/><path d="M12.5 0.8L16.6 4.6L12.5 8.4L8.6 4.6Z" fill="none" stroke="#fff" stroke-width="1.3"/></svg>
  <svg class="abs" style="left:39px;top:524px" width="19" height="17" viewBox="0 0 19 17"><g fill="none" stroke="#fff" stroke-width="0.9"><circle cx="2.5" cy="3" r="1.3"/><circle cx="2.5" cy="9" r="1.3"/><circle cx="2.5" cy="14.5" r="1.3"/><path d="M2.5 4.3V7.7M2.5 10.3V13.2M3.8 3H6.4M3.8 9H6.4M3.8 14.5H6.4"/><rect x="6.4" y="1.5" width="7.3" height="3" rx="1.2"/><rect x="6.4" y="7.5" width="10.8" height="3" rx="1.2"/><rect x="6.4" y="13" width="6.8" height="3" rx="1.2"/></g></svg>
  <div class="abs" style="left:0px;top:550px;width:36px;height:36px;border-radius:50%;background:radial-gradient(circle,rgba(255,255,255,.35) 0%,rgba(255,255,255,.25) 55%,rgba(255,255,255,0) 72%)"></div>
  <div class="abs" style="left:10px;top:562px;width:16px;height:12px;border-radius:2.5px;background:#fff;color:#444;font-size:8.5px;line-height:12px;text-align:center;letter-spacing:-0.3px">+99</div>
  <svg class="abs" style="left:19px;top:573px" width="5" height="5"><path d="M0 0H5L1.5 4Z" fill="#fff"/></svg>
  <svg class="abs" style="left:39px;top:558px" width="18" height="19" viewBox="0 0 18 19"><path d="M8.8 3.6A1 1 0 1 1 9.2 3.6" fill="none" stroke="#fff" stroke-width="1"/><path d="M4 12.5V9C4 6 6.2 3.8 9 3.8C11.8 3.8 14 6 14 9V12.5L16.8 15.6H1.2Z" fill="none" stroke="#fff" stroke-width="1.1" stroke-linejoin="round"/><path d="M7 15.8A2 2 0 0 0 11 15.8" fill="none" stroke="#fff" stroke-width="1.1"/></svg>
  <!-- avatar -->
  <svg class="abs" style="left:8px;top:591px" width="50" height="50" viewBox="0 0 50 50">
    <defs><clipPath id="avc"><circle cx="25.4" cy="25.1" r="20.6"/></clipPath>
    <linearGradient id="shirt" x1="0" y1="0" x2="0" y2="1"><stop offset="0" stop-color="#a80808"/><stop offset="1" stop-color="#7a0000"/></linearGradient></defs>
    <circle cx="25.4" cy="25.1" r="21.5" fill="#fff" stroke="#0b8a0b" stroke-width="2.4"/>
    <g clip-path="url(#avc)">
      <path d="M19.5 30H32V38H19.5Z" fill="#e8a95a"/>
      <path d="M4 50V40C8 35.5 14 34.5 20 34C22 37 29 37 31.5 34C37 34.5 42 35.5 46 40V50Z" fill="url(#shirt)"/>
      <path d="M17.5 17C17.5 11 21 9 25.5 9C30 9 33.5 11 33.5 17V24C33.5 29 30 32.5 25.5 32.5C21 32.5 17.5 29 17.5 24Z" fill="#f2bb68" stroke="#7a4510" stroke-width="0.6"/>
      <path d="M15.5 19C15 11 19.5 7.8 25.5 7.8C31.5 7.8 36 11 35.6 19.5C35.2 22 34.4 23.5 33.6 24.5C33.8 20.5 33.4 17.8 32.5 15.5C29 17.5 23 18.5 18 18.5C17.6 20.5 17.6 22.5 17.7 24.5C16.6 23.2 15.8 21.5 15.5 19Z" fill="#8b4a12"/>
    </g>
  </svg>
  <div class="t" style="left:0;top:644px;width:66px;text-align:center;font-size:10px;font-weight:bold;color:#fff">11:57</div>
  <div class="t fa" style="left:0;top:659px;width:66px;text-align:center;font-size:10px;font-weight:bold;color:#fff">سه‌شنبه</div>
  <div class="t fa" style="left:0;top:673px;width:66px;text-align:center;font-size:10px;font-weight:bold;color:#fff">20 دی</div>
  <div class="abs" style="left:0;top:683px;width:66px;height:12px;background:#436a5f"></div>
</div>
<div id="black" class="abs"></div>

</body></html>
